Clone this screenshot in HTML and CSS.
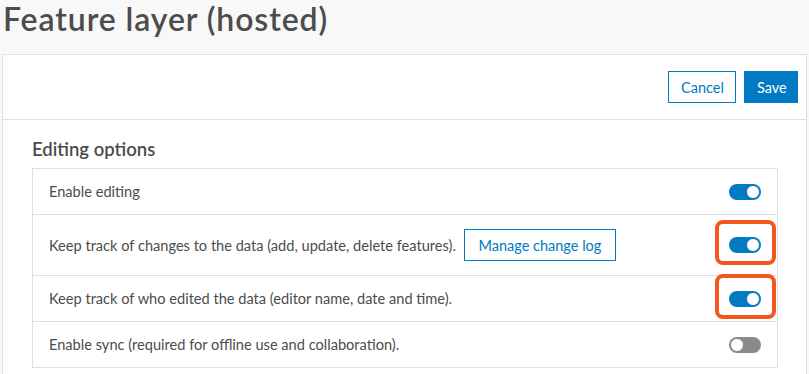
FILE: index.html
```html
<!DOCTYPE html>
<html>
<head>
<meta charset="utf-8">
<link rel="stylesheet" href="styles.css">
</head>
<body>
<h1 class="title">Feature layer (hosted)</h1>
<div class="card">
  <div class="card-header">
    <button class="btn btn-outline">Cancel</button>
    <button class="btn btn-solid">Save</button>
  </div>
  <div class="card-body">
    <h2 class="section-title">Editing options</h2>
    <div class="options">
      <div class="row">
        <span class="label">Enable editing</span>
        <span class="toggle on"><span class="knob"></span></span>
      </div>
      <div class="row">
        <span class="label">Keep track of changes to the data (add, update, delete features).</span>
        <button class="btn btn-outline btn-inline">Manage change log</button>
        <span class="toggle on highlighted"><span class="knob"></span></span>
      </div>
      <div class="row">
        <span class="label">Keep track of who edited the data (editor name, date and time).</span>
        <span class="toggle on highlighted"><span class="knob"></span></span>
      </div>
      <div class="row">
        <span class="label">Enable sync (required for offline use and collaboration).</span>
        <span class="toggle off"><span class="knob"></span></span>
      </div>
    </div>
  </div>
</div>
</body>
</html>
```

FILE: styles.css
```css
* { box-sizing: border-box; }
body {
  margin: 0;
  background: #f8f8f8;
  font-family: Lato, "Open Sans", sans-serif;
  color: #4c4c4c;
  overflow: hidden;
}
.title {
  margin: 0;
  height: 54px;
  padding-left: 3px;
  font-size: 32px;
  letter-spacing: 0.9px;
  line-height: 38px;
  font-weight: 600;
  color: #4c4c4c;
}
.card {
  margin: 0 2px 0 2px;
  background: #fff;
  border: 1px solid #dfdfdf;
  height: 340px;
}
.card-header {
  display: flex;
  justify-content: flex-end;
  gap: 8px;
  padding: 16px 8px 16px 8px;
  border-bottom: 1px solid #dfdfdf;
}
.btn {
  font-family: Lato, "Open Sans", sans-serif;
  font-size: 14.5px;
  height: 32px;
  padding: 0 12px;
  cursor: pointer;
}
.btn-outline {
  background: #fff;
  color: #007ac2;
  border: 1px solid #007ac2;
}
.btn-solid {
  background: #007ac2;
  color: #fff;
  border: 1px solid #007ac2;
}
.card-header .btn-outline { width: 68px; }
.card-header .btn-solid { width: 54px; }
.card-body {
  padding: 16px 28px 0 29px;
}
.section-title {
  margin: 0 0 6px 0;
  font-size: 18.5px;
  line-height: 26px;
  font-weight: 600;
  color: #4c4c4c;
}
.options {
  border: 1px solid #dfdfdf;
}
.row {
  display: flex;
  align-items: center;
  min-height: 45px;
  padding: 14px 16px 14px 16px;
  border-top: 1px solid #dfdfdf;
  font-size: 14.6px;
  color: #4c4c4c;
}
.row:first-child { border-top: none; min-height: 44px; }
.label { flex: 0 0 auto; }
.btn-inline {
  margin-left: 8px;
  width: 152px;
  height: 32px;
}
.toggle {
  margin-left: auto;
  position: relative;
  width: 32px;
  height: 16px;
  border-radius: 8px;
  display: flex;
  align-items: center;
  padding: 0 1px;
}
.toggle.on { background: #007ac2; justify-content: flex-end; }
.toggle.off { background: #8a8a8a; justify-content: flex-start; }
.knob {
  width: 14px;
  height: 14px;
  border-radius: 50%;
  background: #fff;
}
.toggle.on .knob { border: 1px solid #007ac2; }
.toggle.off .knob { border: 1px solid #8a8a8a; }
.highlighted::after {
  content: "";
  position: absolute;
  left: -14px;
  right: -15px;
  top: -17px;
  bottom: -12px;
  border: 4px solid #f5561c;
  border-radius: 8px;
}
```
